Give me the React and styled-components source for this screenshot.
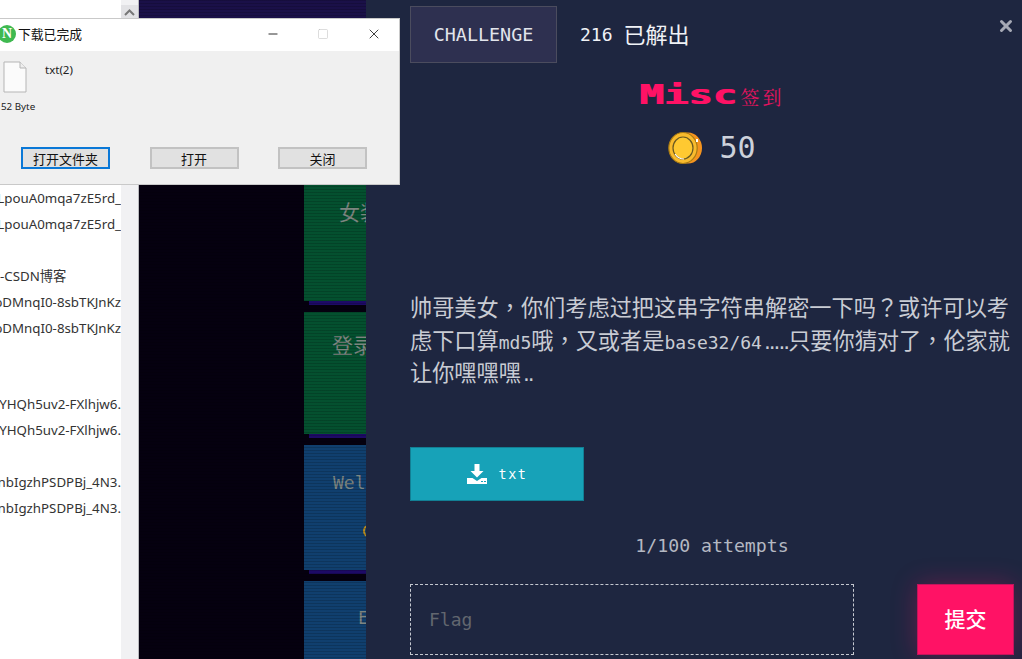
import React from 'react';
import styled, { createGlobalStyle } from 'styled-components';
import { X, Minus, Square } from 'lucide-react';

const Global = createGlobalStyle`
  html, body { margin: 0; padding: 0; background: #1e2640; }
  body { width: 1022px; height: 659px; overflow: hidden; font-family: "DejaVu Sans Mono", "Noto Sans CJK SC", monospace; }
  * { box-sizing: border-box; }
`;
const Page = styled.div`position: relative; display: flex; width: 1022px; height: 659px; overflow: hidden;`;

const FilePanel = styled.aside`display: flex; width: 139px; flex: none; background: #fff;`;
const FileList = styled.ul`
  list-style: none; margin: 0; padding: 185px 0 0; width: 121px; flex: none; overflow: hidden;
  font: 13.3px/26px "Noto Sans", "Noto Sans CJK SC", sans-serif; color: #333;
`;
const FileRow = styled.li`height: ${p => p.$h}px; display: flex; justify-content: ${p => p.$start ? 'flex-start' : 'flex-end'}; white-space: nowrap;`;
const ScrollTrack = styled.div`flex: 1; background: #f1f1f3; border-right: 1px solid #b9b9bd; padding-top: 5px;`;
const ScrollUp = styled.div`height: 14px; background: #e2e2e5; color: #777; display: flex; align-items: center; justify-content: center;`;

const Board = styled.main`position: relative; width: 227px; flex: none; overflow: hidden; background: #05000f;
  &::after { content: ""; position: absolute; inset: 0; pointer-events: none;
    background: repeating-linear-gradient(180deg, rgba(0,0,0,.16) 0 1px, transparent 1px 3px); }
`;
const BoardHeader = styled.div`height: 18px; background: #1a1048; margin-bottom: 158px;`;
const CardStack = styled.div`display: flex; flex-direction: column; gap: 11px; margin-left: 165px; width: 210px;`;
const Card = styled.div`
  height: ${p => p.$h}px; padding: ${p => p.$top}px 0 0 ${p => p.$left}px; background: ${p => p.$bg};
  box-shadow: 5px 4px 0 #1d0a66; color: #7d8580; position: relative;
  font: ${p => p.$size}px/1.2 "DejaVu Sans Mono", "Noto Sans CJK SC", monospace; white-space: nowrap;
`;
const CardCoin = styled.span`position: absolute; left: 59px; top: 80px; width: 10px; height: 12px; border: 2px solid #b88a1e; border-radius: 50%;`;

const Modal = styled.section`flex: 1; background: #1e2640; padding: 6px 8px 0 44px; position: relative; color: #e4e6ec; display: flex; flex-direction: column;`;
const Head = styled.header`display: flex; align-items: center; gap: 23px;`;
const Tag = styled.div`width: 147px; height: 57px; background: #2e3050; border: 1px solid #4b4c5e; display: flex; align-items: center; justify-content: center; font-size: 18.4px; color: #e2e5ec;`;
const Solved = styled.div`font: 18px/1 "DejaVu Sans Mono", monospace; color: #f0f2f6; display: flex; gap: 11px; align-items: center;`;
const SolvedLabel = styled.span`font: 22px/1 "Noto Sans CJK SC", sans-serif; margin-bottom: 3px;`;
const CloseIcon = styled.button`position: absolute; top: 17px; right: 7px; width: 18px; height: 18px; padding: 0; border: 0; background: none; color: #a6a9b5; display: flex;`;
const TitleRow = styled.h1`margin: 17px 0 0; display: flex; justify-content: center; align-items: flex-end; height: 30px; font-weight: 700; color: #ff1265; gap: 3px;`;
const TitleWord = styled.span`display: inline-block; width: 98px; font: 700 27px/30px "DejaVu Sans Mono", monospace; transform: scaleX(1.5); transform-origin: left center; text-shadow: 1px 0 0 #ff1265;`;
const TitleSub = styled.span`font: 400 19px/24px "Noto Serif CJK SC", "Noto Sans CJK SC", sans-serif; letter-spacing: 3px; color: #e5135f; margin-bottom: 1px;`;
const Points = styled.div`margin-top: 16px; display: flex; justify-content: center; align-items: center; gap: 16px; height: 44px; font: 30px/1 "DejaVu Sans Mono", monospace; color: #cdd1da;`;
const Desc = styled.p`margin: 120px 0 0; width: 604px; font: 22.2px/32.5px "Noto Sans CJK TC", "Noto Sans CJK SC", sans-serif; color: #c9ccd4;`;
const DescCode = styled.span`font: 18px/20px "DejaVu Sans Mono", monospace; letter-spacing: ${p => p.$tight ? '-6px' : '0'}; margin-right: ${p => p.$tight ? '2px' : '0'};`;
const Download = styled.button`margin-top: 59px; width: 174px; height: 54px; background: #17a2b8; border: 1px solid #127f94; color: #fff; display: flex; align-items: center; justify-content: center; gap: 12px; font: 13.5px/1 "DejaVu Sans Mono", monospace; letter-spacing: 1.5px; padding: 0;`;
const DownloadLabel = styled.span`margin-top: 3px;`;
const Attempts = styled.div`margin-top: 33px; text-align: center; font: 18.2px/24px "DejaVu Sans Mono", monospace; color: #b4b8c2;`;
const SubmitRow = styled.div`margin-top: 26px; display: flex; justify-content: space-between;`;
const FlagInput = styled.div`width: 444px; height: 71px; border: 1px dashed #c5c8d0; display: flex; align-items: center; padding-left: 18px; font-size: 18px; color: #62666f;`;
const SubmitBtn = styled.button`width: 97px; height: 71px; border: 1px solid #c2155c; background: #ff1265; color: #fff; font: 500 21px/1 "Noto Sans CJK SC", sans-serif; box-shadow: 0 0 26px rgba(255,18,101,.28); padding: 0 0 2px;`;

const Dialog = styled.div`position: absolute; left: -1px; top: 18px; width: 401px; height: 167px; background: #f0f0f0; border: 1px solid #c9c9c9; font-family: "Noto Sans CJK SC", sans-serif; color: #111; display: flex; flex-direction: column;`;
const DialogBar = styled.div`height: 32px; padding-bottom: 2px; background: #fff; display: flex; align-items: center; font-size: 12.8px; line-height: 1; margin-left: -2px;`;
const AppIcon = styled.span`width: 18px; height: 18px; border-radius: 50%; background: #3fb950; color: #fff; font: 700 14px/18px "Liberation Serif", serif; text-align: center; margin-right: 2px;`;
const WinButtons = styled.div`margin-left: auto; display: flex; align-items: center; gap: 37px; padding-right: 17px;`;
const DialogBody = styled.div`flex: 1; display: flex; flex-direction: column; position: relative;`;
const FileInfo = styled.div`display: flex; padding: 10px 0 0 3px; gap: 18px;`;
const FileName = styled.span`font: 11.5px/16px "Noto Sans", sans-serif; color: #222; margin-top: 1px;`;
const FileSize = styled.div`margin-top: 7px; font: 9.8px/14px "Noto Sans", sans-serif; color: #222; margin-left: 1px;`;
const DialogActions = styled.div`margin-top: auto; padding: 0 32px 15px 21px; display: flex; justify-content: space-between;`;
const DlgBtn = styled.button`width: 89px; height: 22px; padding: 0; background: #e1e1e1; border: 2px solid ${p => p.$primary ? '#0a78d7' : '#c2c2c2'}; font: 13px/1 "Noto Sans CJK SC", sans-serif; color: #111;`;

const files = [
  ['LpouA0mqa7zE5rd_', 26], ['LpouA0mqa7zE5rd_', 26], ['', 26], ['-CSDN博客', 26],
  ['bDMnqI0-8sbTKJnKz', 26], ['bDMnqI0-8sbTKJnKz', 26], ['', 24], ['', 26],
  ['YHQh5uv2-FXlhjw6.', 26], ['YHQh5uv2-FXlhjw6.', 26], ['', 26], ['nbIgzhPSDPBj_4N3.', 26], ['nbIgzhPSDPBj_4N3.', 26],
];

const Coin = () => (
  <svg width="35" height="34" viewBox="0 0 35 34">
    <ellipse cx="20" cy="17" rx="14" ry="15.5" fill="#f5941f" />
    <ellipse cx="15" cy="17" rx="14.2" ry="15.5" fill="#f9bb2d" stroke="#a87a14" strokeWidth="1.200" />
    <ellipse cx="15" cy="17" rx="10" ry="11" fill="#ffc931" stroke="#6b5a22" strokeWidth="1.200" />
    <path d="M7 23c2 3 5 5 9 5" fill="none" stroke="#fff" strokeWidth="1.200" />
    <rect x="28" y="8" width="2" height="3" fill="#fff" />
  </svg>
);
const DownloadIcon = () => (
  <svg width="20" height="20" viewBox="0 0 20 20" fill="#fff">
    <path d="M7.5 0h5v7h4l-6.500 6.500L3.500 7h4z" />
    <path d="M0 14h5.500l4.500 3 4.500-3H20v6H0z" />
    <rect x="14" y="17" width="2" height="1" fill="#17a2b8" />
    <rect x="17" y="17" width="2" height="1" fill="#17a2b8" />
  </svg>
);
const FileGlyph = () => (
  <svg width="24" height="32" viewBox="0 0 24 32">
    <path d="M1 1h16l6 6v24H1z" fill="#fbfbfb" stroke="#b5b5b5" />
    <path d="M17 1v6h6" fill="#eee" stroke="#b5b5b5" />
  </svg>
);

export default function App() {
  return (
    <Page>
      <Global />
      <FilePanel>
        <FileList>
          {files.map(([f, h], i) => <FileRow key={i} $h={h} $start={f.startsWith('-')}>{f || '\u00a0'}</FileRow>)}
        </FileList>
        <ScrollTrack>
          <ScrollUp>
            <svg width="11" height="7" viewBox="0 0 11 7" fill="none" stroke="currentColor" strokeWidth="2"><path d="M1 6l4.500-4.500L10 6" /></svg>
          </ScrollUp>
        </ScrollTrack>
      </FilePanel>

      <Board>
        <BoardHeader />
        <CardStack>
          <Card $h={125} $bg="#04502f" $left={35} $top={25} $size={21}>女装</Card>
          <Card $h={122} $bg="#04502f" $left={28} $top={22} $size={21}>登录</Card>
          <Card $h={125} $bg="#103f6e" $left={29} $top={27} $size={18}>Welcome<CardCoin /></Card>
          <Card $h={125} $bg="#103f6e" $left={54} $top={26} $size={18}>Easy</Card>
        </CardStack>
      </Board>

      <Modal>
        <Head>
          <Tag>CHALLENGE</Tag>
          <Solved><span>216</span><SolvedLabel>已解出</SolvedLabel></Solved>
        </Head>
        <CloseIcon aria-label="close"><X size={18} strokeWidth={4} /></CloseIcon>
        <TitleRow><TitleWord>Misc</TitleWord><TitleSub>签到</TitleSub></TitleRow>
        <Points><Coin /><span>50</span></Points>
        <Desc>
          帅哥美女，你们考虑过把这串字符串解密一下吗？或许可以考虑下口算<DescCode>md5</DescCode>哦，又或者是<DescCode>base32/64</DescCode><DescCode $tight>.....</DescCode>只要你猜对了，伦家就让你嘿嘿嘿<DescCode $tight>..</DescCode>
        </Desc>
        <Download><DownloadIcon /><DownloadLabel>txt</DownloadLabel></Download>
        <Attempts>1/100 attempts</Attempts>
        <SubmitRow>
          <FlagInput>Flag</FlagInput>
          <SubmitBtn>提交</SubmitBtn>
        </SubmitRow>
      </Modal>

      <Dialog>
        <DialogBar>
          <AppIcon>N</AppIcon>下载已完成
          <WinButtons>
            <Minus size={14} strokeWidth={1.5} color="#111" />
            <Square size={12} strokeWidth={1} color="#bbb" />
            <X size={16} strokeWidth={1.3} color="#222" />
          </WinButtons>
        </DialogBar>
        <DialogBody>
          <FileInfo><FileGlyph /><FileName>txt(2)</FileName></FileInfo>
          <FileSize>52 Byte</FileSize>
          <DialogActions>
            <DlgBtn $primary>打开文件夹</DlgBtn>
            <DlgBtn>打开</DlgBtn>
            <DlgBtn>关闭</DlgBtn>
          </DialogActions>
        </DialogBody>
      </Dialog>
    </Page>
  );
}
